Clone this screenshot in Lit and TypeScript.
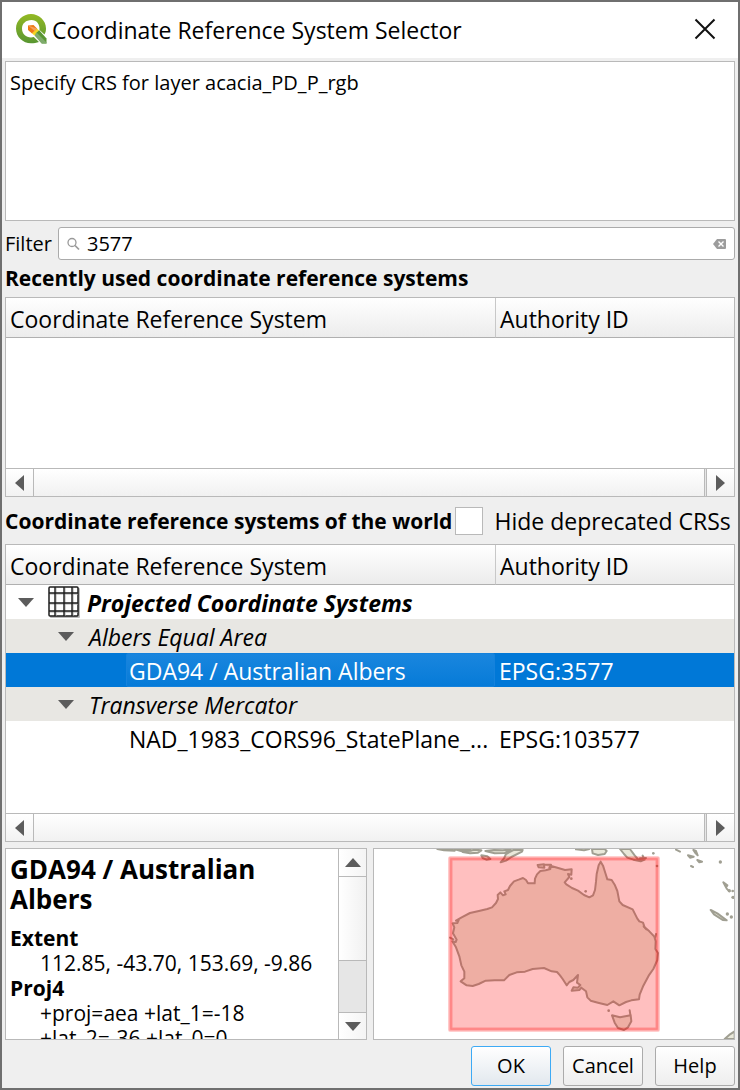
import { LitElement, html, svg, css, nothing } from "lit";
import { customElement, property, state } from "lit/decorators.js";
import { classMap } from "lit/directives/class-map.js";

type Row = { kind: "root" | "group" | "item"; name: string; id?: string };

const ROWS: Row[] = [
  { kind: "root", name: "Projected Coordinate Systems" },
  { kind: "group", name: "Albers Equal Area" },
  { kind: "item", name: "GDA94 / Australian Albers", id: "EPSG:3577" },
  { kind: "group", name: "Transverse Mercator" },
  { kind: "item", name: "NAD_1983_CORS96_StatePlane_...", id: "EPSG:103577" },
];

const ARROWS: Record<string, string> = {
  left: "M10 0V16L1 8Z",
  right: "M1 0V16L10 8Z",
  up: "M0 10H16L8 1Z",
  down: "M0 1H16L8 10Z",
};

const arrow = (dir: string) => {
  const flat = dir === "up" || dir === "down";
  return html`<svg
    width=${flat ? 16 : 12}
    height=${flat ? 11 : 16}
    viewBox=${flat ? "0 0 16 11" : "0 0 12 16"}
    fill="#5c5c5c"
    aria-hidden="true"
  ><path d=${ARROWS[dir]} /></svg>`;
};

@customElement("crs-scrollbar")
class CrsScrollbar extends LitElement {
  @property({ type: Boolean, reflect: true }) vertical = false;

  static styles = css`
    :host {
      display: flex;
      flex: none;
      box-sizing: border-box;
      height: 28px;
      border-top: 1px solid #b9b9b9;
      background: #e6e6e6;
    }
    :host([vertical]) {
      flex-direction: column;
      width: 28px;
      height: auto;
      border-top: 0;
      border-left: 1px solid #b9b9b9;
    }
    button {
      flex: 0 0 27px;
      display: flex;
      align-items: center;
      justify-content: center;
      padding: 0;
      border: 0;
      background: linear-gradient(#ffffff, #f2f2f2);
    }
    .thumb {
      flex: 1;
      border: solid #b9b9b9;
      border-width: 0 1px;
      background: linear-gradient(#ffffff, #f1f1f1);
    }
    .thumb + button {
      margin-left: 1px;
      border-left: 1px solid #b9b9b9;
      flex-basis: 28px;
    }
    :host([vertical]) button {
      background: linear-gradient(90deg, #ffffff, #f4f4f4);
    }
    :host([vertical]) .thumb {
      flex: 62 1 0;
      border-width: 1px 0;
      background: linear-gradient(90deg, #ffffff, #f1f1f1);
    }
    .rest {
      flex: 38 1 0;
    }
    .rest + button {
      border-top: 1px solid #b9b9b9;
    }
  `;

  render() {
    return html`
      <button aria-label="Scroll back">${arrow(this.vertical ? "up" : "left")}</button>
      <div class="thumb"></div>
      ${this.vertical ? html`<div class="rest"></div>` : nothing}
      <button aria-label="Scroll forward">${arrow(this.vertical ? "down" : "right")}</button>
    `;
  }
}

@customElement("crs-table")
class CrsTable extends LitElement {
  @property({ attribute: false }) rows: Row[] = [];
  @property() label = "";
  @state() private selected = "EPSG:3577";

  static styles = css`
    :host {
      display: flex;
      flex-direction: column;
      box-sizing: border-box;
      border: 1px solid #b9b9b9;
      background: #fff;
      font: 23px/30px "Open Sans", "Noto Sans", sans-serif;
    }
    .body {
      flex: 1;
      min-height: 0;
      overflow: hidden;
    }
    table {
      width: 100%;
      table-layout: fixed;
      border-collapse: separate;
      border-spacing: 0;
    }
    .authority {
      width: 239px;
    }
    th {
      height: 40px;
      box-sizing: border-box;
      padding: 2px 4px 0;
      text-align: left;
      font-weight: 400;
      border-bottom: 1px solid #b0b0b0;
      background: linear-gradient(#ffffff, #ececec);
    }
    th + th {
      border-left: 1px solid #c8c8c8;
    }
    td {
      height: 34px;
      box-sizing: border-box;
      padding: 2px 4px 0;
      white-space: nowrap;
      overflow: hidden;
    }
    .group td {
      background: #e8e7e3;
      font-style: italic;
    }
    .root td {
      font-weight: 700;
      font-style: italic;
    }
    .name {
      display: flex;
      align-items: center;
      height: 32px;
    }
    .name svg {
      flex: none;
    }
    .root .name {
      padding-left: 8px;
    }
    .group .name {
      padding-left: 48px;
    }
    .root .name > svg:first-child {
      margin-bottom: 2px;
    }
    .group .name > svg {
      margin: 0 15px 2px 0;
    }
    .root .name > .grid {
      margin: 0 7px 2px 14px;
    }
    .item td:first-child {
      padding: 0 0 0 120px;
    }
    .item .name {
      box-sizing: border-box;
      height: 34px;
      padding: 2px 0 0 3px;
    }
    .selected td {
      background: #0078d7;
      color: #fff;
    }
    .selected .name {
      border: 1px solid #1582dc;
      padding: 1px 0 0 2px;
      border-radius: 2px;
      background: linear-gradient(#1a86de, #067bd8);
    }
  `;

  private cells(r: Row) {
    if (r.kind === "item") return html`<td><div class="name">${r.name}</div></td><td>${r.id}</td>`;
    return html`<td colspan="2">
      <div class="name">${arrow("down")}${r.kind === "root"
        ? html`<svg class="grid" width="32" height="32" viewBox="0 0 32 32" fill="none" aria-hidden="true">
            <rect x="2" y="2" width="30" height="30" rx="1" fill="#bbb" />
            <rect x="1" y="1" width="29" height="29" rx="1" fill="#fff" stroke="#1c1c1c" stroke-width="1.5" />
            <path d="M8 2V30M17 2V30M25 2V30M2 8H30M2 18H30M2 26H30" stroke="#aaa" />
            <path d="M7 1V30M16 1V30M24 1V30M1 7H30M1 17H30M1 25H30" stroke="#1c1c1c" stroke-width="1.4" />
          </svg>`
        : nothing}<span>${r.name}</span></div>
    </td>`;
  }

  render() {
    return html`
      <div class="body">
        <table aria-label=${this.label}>
          <colgroup><col /><col class="authority" /></colgroup>
          <thead>
            <tr><th scope="col">Coordinate Reference System</th><th scope="col">Authority ID</th></tr>
          </thead>
          <tbody>
            ${this.rows.map(
              (r) => html`<tr
                class=${classMap({ [r.kind]: true, selected: !!r.id && r.id === this.selected })}
                @click=${() => r.id && (this.selected = r.id)}
              >${this.cells(r)}</tr>`
            )}
          </tbody>
        </table>
      </div>
      <crs-scrollbar></crs-scrollbar>
    `;
  }
}

const AUSTRALIA =
  "M258 362L275 352L300 339L330 332L352 327L366 322L378 309L384 297L383 285L391 277L399 286L407 283L403 274L414 270L420 258L432 244L446 239L459 234L468 240L474 250L494 250L495 236L501 223L511 213L527 211L541 207L541 197L562 203L585 210L605 208L604 224L594 222L598 231L584 247L589 253L606 264L624 272L642 285L658 292L669 286L675 270L678 245L680 222L686 196L692 185L699 197L706 219L712 238L725 240L734 254L742 273L748 304L758 315L788 328L802 356L808 364L819 368L824 382L838 394L853 410L857 424L856 447L864 459L862 480L850 507L836 527L820 557L809 584L807 598L784 601L768 606L748 616L730 604L712 615L684 608L662 602L652 592L648 574L634 563L628 570L605 572L610 562L624 563L631 555L621 548L624 525L610 540L598 546L590 556L578 537L570 526L561 516L545 514L522 504L488 507L465 515L440 517L418 525L402 541L374 541L347 542L326 552L308 558L290 556L272 544L283 535L283 515L274 496L268 469L258 442L247 424L257 426L260 419L249 400L253 382L248 370L262 369L266 360Z";

@customElement("crs-extent-map")
class CrsExtentMap extends LitElement {
  static styles = css`
    :host {
      display: block;
      box-sizing: border-box;
      border: 1px solid #b9b9b9;
      background: #fff;
      overflow: hidden;
    }
    svg {
      display: block;
      width: 100%;
      height: 100%;
    }
  `;

  render() {
    const dots = [
      [850, 160, 4], [861, 198, 4], [1051, 186, 5], [1072, 342, 5], [1084, 351, 5],
      [1089, 292, 5], [1078, 272, 5], [1088, 273, 4], [604, 236, 4], [647, 274, 4], [716, 632, 4],
    ];
    return html`<svg viewBox="12 147 1080 570" preserveAspectRatio="xMidYMid slice" role="img" aria-label="Extent map">
      <g fill="#e9e8da" stroke="#a09f92" stroke-width="6" stroke-linejoin="round" stroke-linecap="round">
        <path d="M202 147L222 151L254 152L240 147ZM254 148L276 154L304 152L298 147ZM278 156L300 160L324 158L334 151L316 149L292 153ZM346 153L372 150L398 151L422 148L404 159L374 160ZM334 166L352 169L361 177L349 179L338 174ZM392 187L408 182L424 171L456 155L458 150L430 150L408 162L402 175Z" />
        <path d="M618 148L642 151L658 147M666 147L668 160L684 165L704 162L710 153L704 147ZM750 147L762 162L772 173L790 179L812 184L824 179L818 167L822 178L806 180L794 166L782 150L780 147ZM810 175L828 174" />
        <path d="M918 149L930 155M954 166L971 170L960 173ZM970 150L978 153L983 166L977 160ZM982 180L996 185L988 187ZM963 198L969 201M1060 247L1072 256L1068 262ZM1070 266L1078 274M1022 330L1042 340L1070 361L1058 360L1032 343Z" />
        <path d="M1064 717L1080 703L1094 694V717Z" />
        <path d=${AUSTRALIA} />
        <path d="M503 195L522 193L523 203L506 202ZM526 194L543 194L538 204M779 631L781 644M821 379L829 388M858 402L856 411M240 413L250 418" />
        <path d="M726 646L750 652L782 646L784 664L774 682L762 690L744 684L734 668Z" />
        ${dots.map(([x, y, r]) => svg`<circle cx=${x} cy=${y} r=${r} fill="#a09f92" stroke="none" />`)}
      </g>
      <rect x="241" y="175" width="622" height="514" fill="#ff0000" fill-opacity=".25" />
      <rect x="241" y="175" width="622" height="514" fill="none" stroke="#ff0000" stroke-opacity=".25" stroke-width="13" stroke-linejoin="round" />
      <rect x="241" y="175" width="622" height="514" fill="none" stroke="#ff0000" stroke-opacity=".15" stroke-width="6" />
    </svg>`;
  }
}

@customElement("app-root")
class AppRoot extends LitElement {
  @state() private filter = "3577";

  static styles = css`
    :host {
      display: flex;
      flex-direction: column;
      box-sizing: border-box;
      min-height: 100vh;
      border: 2px solid #6f6f6f;
      background: #efefef;
      color: #000;
      font: 20px/26px "Open Sans", "Noto Sans", sans-serif;
    }
    header {
      display: flex;
      align-items: center;
      gap: 4px;
      height: 56px;
      padding: 0 20px 0 14px;
      background: #fff;
    }
    h1 {
      flex: 1;
      margin: 0;
      font-size: 23px;
      font-weight: 400;
    }
    .close {
      display: flex;
      padding: 0;
      border: 0;
      background: none;
    }
    main {
      flex: 1;
      display: flex;
      flex-direction: column;
      padding: 3px 3px 2px;
    }
    textarea,
    input {
      font: inherit;
      color: inherit;
      outline: 0;
    }
    textarea {
      flex: 160 1 160px;
      box-sizing: border-box;
      padding: 8px 4px;
      border: 1px solid #b9b9b9;
      background: #fff;
      resize: none;
    }
    .filter {
      display: flex;
      align-items: center;
      gap: 6px;
      margin-top: 6px;
    }
    .field {
      flex: 1;
      display: flex;
      align-items: center;
      box-sizing: border-box;
      height: 33px;
      padding: 0 8px 0 7px;
      gap: 7px;
      border: 1px solid #ababab;
      border-radius: 3px;
      background: #fff;
    }
    .field input {
      flex: 1;
      min-width: 0;
      padding: 0;
      border: 0;
      background: none;
    }
    .field button {
      display: flex;
      padding: 0;
      border: 0;
      background: none;
    }
    h2 {
      margin: 0;
      font-size: 21px;
      font-weight: 700;
      white-space: nowrap;
    }
    .recent {
      line-height: 37px;
    }
    .world {
      display: flex;
      align-items: center;
      height: 47px;
      gap: 3px;
    }
    .hide {
      display: flex;
      align-items: center;
      gap: 11px;
      font-size: 23px;
      white-space: nowrap;
    }
    .hide input {
      appearance: none;
      width: 28px;
      height: 28px;
      margin: 0;
      border: 1px solid #b9b9b9;
      background: #fff;
    }
    .hide input:checked {
      background: #0078d7;
    }
    .small {
      flex: 200 1 200px;
    }
    .large {
      flex: 298 1 298px;
    }
    .panels {
      flex: 192 1 192px;
      display: grid;
      grid-template-columns: 1fr 1fr;
      grid-template-rows: minmax(0, 1fr);
      gap: 6px;
      margin: 6px 0;
    }
    .details {
      display: flex;
      height: 0;
      min-height: 100%;
      box-sizing: border-box;
      border: 1px solid #b9b9b9;
      background: #fff;
    }
    .text {
      flex: 1;
      overflow: hidden;
      padding: 5px 4px 0;
    }
    h3 {
      margin: 0 0 12px;
      font-size: 26px;
      line-height: 30px;
    }
    dl {
      margin: 0;
      font-size: 21px;
      line-height: 25px;
    }
    dt {
      font-weight: 700;
    }
    dd {
      margin: 0 0 0 30px;
    }
    .actions {
      display: flex;
      justify-content: flex-end;
      gap: 12px;
    }
    .actions button {
      width: 80px;
      height: 40px;
      padding: 0;
      font: inherit;
      color: inherit;
      border: 1px solid #ababab;
      border-radius: 3px;
      background: linear-gradient(#ffffff, #eeeeee);
    }
    .actions .ok {
      border-color: #3daaf5;
      background: linear-gradient(#ffffff, #e2e8ee);
    }
  `;

  render() {
    return html`
      <header>
        <svg width="32" height="32" viewBox="0 0 32 32" aria-hidden="true">
          <defs>
            <linearGradient id="ring" x1="0" y1="0" x2="0" y2="1">
              <stop offset="0" stop-color="#93b923" />
              <stop offset="1" stop-color="#589632" />
            </linearGradient>
          </defs>
          <path
            fill="url(#ring)"
            d="M15 0C23 0 30 6.500 30 14.500C30 17 29.500 18.500 28.500 20.500L23.500 16C24 10 20.500 6 15.500 6C10 6 6 9.500 6 14.500C6 20 10 23.500 15 23.500C16 23.500 17 23.300 17.800 23L23 28C20.500 29 18 29.300 15 29.300C7 29.300 0 23 0 14.500C0 6.500 7 0 15 0Z"
          />
          <path d="M18.500 19.500L23 16L30.500 24.500V29.500H26Z" fill="#589632" />
          <path d="M18.500 21.500L20.500 18.500L30.500 28.500V29.500H25.500Z" fill="#7fab6c" />
          <path d="M16 19.500L20.500 14L23 16.500L20.500 18.500L18.500 21.500Z" fill="#f3d520" />
          <path d="M12 11.500L17.500 11L21 14.500L18.500 17L16 19.500L12 16Z" fill="#ee7913" />
          <path d="M12 11.500L21 14.500L18.500 17Z" fill="#f4a05c" />
        </svg>
        <h1>Coordinate Reference System Selector</h1>
        <button class="close" aria-label="Close">
          <svg width="26" height="26" viewBox="0 0 26 26" stroke="#111" stroke-width="2" fill="none">
            <path d="M3.500 2.500L22.500 21.500M22.500 2.500L3.500 21.500" />
          </svg>
        </button>
      </header>
      <main>
        <textarea readonly rows="1" aria-label="Message" .value=${"Specify CRS for layer acacia_PD_P_rgb"}></textarea>
        <div class="filter">
          <label for="filter">Filter</label>
          <div class="field">
            <svg width="14" height="16" viewBox="0 0 14 16" fill="none" stroke="#999" aria-hidden="true">
              <circle cx="6" cy="6.500" r="4" stroke-width="1.300" />
              <path d="M9 9.500L13 13.500" stroke-width="1.700" />
            </svg>
            <input
              id="filter"
              .value=${this.filter}
              @input=${(e: Event) => (this.filter = (e.target as HTMLInputElement).value)}
            />
            <button aria-label="Clear filter" @click=${() => (this.filter = "")}>
              <svg width="13" height="10" viewBox="0 0 13 10">
                <path d="M0 5L4 0H12Q13 0 13 1V9Q13 10 12 10H4Z" fill="#9c9c9c" />
                <path d="M5.500 2.500L10.500 7.500M10.500 2.500L5.500 7.500" stroke="#fff" stroke-width="1.400" />
              </svg>
            </button>
          </div>
        </div>
        <h2 class="recent">Recently used coordinate reference systems</h2>
        <crs-table class="small" label="Recently used coordinate reference systems"></crs-table>
        <div class="world">
          <h2>Coordinate reference systems of the world</h2>
          <label class="hide"><input type="checkbox" />Hide deprecated CRSs</label>
        </div>
        <crs-table class="large" label="Coordinate reference systems of the world" .rows=${ROWS}></crs-table>
        <div class="panels">
          <section class="details">
            <div class="text">
              <h3>GDA94 / Australian Albers</h3>
              <dl>
                <dt>Extent</dt>
                <dd>112.85, -43.70, 153.69, -9.86</dd>
                <dt>Proj4</dt>
                <dd>+proj=aea +lat_1=-18<br />+lat_2=-36 +lat_0=0</dd>
              </dl>
            </div>
            <crs-scrollbar vertical></crs-scrollbar>
          </section>
          <crs-extent-map></crs-extent-map>
        </div>
        <div class="actions">
          <button class="ok">OK</button>
          <button>Cancel</button>
          <button>Help</button>
        </div>
      </main>
    `;
  }
}
